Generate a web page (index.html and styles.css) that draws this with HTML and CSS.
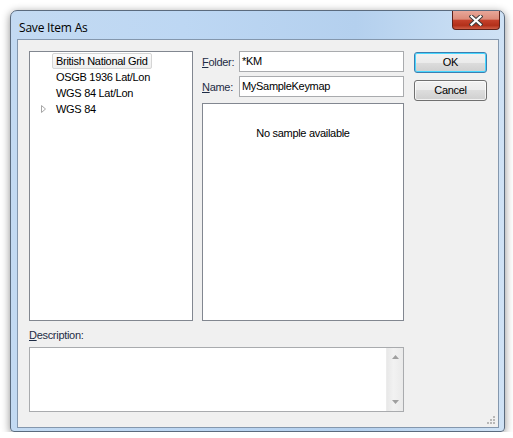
FILE: index.html
```html
<!DOCTYPE html>
<html>
<head>
  <title>Save Item As</title>
  <meta charset="utf-8">
  <link rel="stylesheet" href="styles.css">
</head>
<body>
  <div class="window">
    <div class="titlebar">
      <span class="title">Save Item As</span>
      <div class="close">
        <svg width="14" height="11" viewBox="0 0 14 11">
          <path d="M2.5 1.5 L11.5 9.5 M11.5 1.5 L2.5 9.5" stroke="#3b3b3b" stroke-width="4.2" stroke-linecap="square"/>
          <path d="M2.5 1.5 L11.5 9.5 M11.5 1.5 L2.5 9.5" stroke="#fff" stroke-width="2.2" stroke-linecap="square"/>
        </svg>
      </div>
    </div>
    <div class="client">
      <div class="main">
        <div class="tree">
          <div class="node"><span class="label selected">British National Grid</span></div>
          <div class="node"><span class="label">OSGB 1936 Lat/Lon</span></div>
          <div class="node"><span class="label">WGS 84 Lat/Lon</span></div>
          <div class="node">
            <span class="twisty">
              <svg width="6" height="8" viewBox="0 0 6 8"><path d="M0.5 0.5 L4.5 4 L0.5 7.5 Z" fill="#fff" stroke="#a6a6a6"/></svg>
            </span>
            <span class="label">WGS 84</span>
          </div>
        </div>
        <div class="fields">
          <div class="field">
            <label><u>F</u>older:</label>
            <div class="input">*KM</div>
          </div>
          <div class="field">
            <label><u>N</u>ame:</label>
            <div class="input">MySampleKeymap</div>
          </div>
          <div class="preview">No sample available</div>
        </div>
        <div class="actions">
          <div class="btn default">OK</div>
          <div class="btn">Cancel</div>
        </div>
      </div>
      <div class="desc-label"><u>D</u>escription:</div>
      <div class="desc">
        <div class="scroll">
          <svg width="7" height="4" viewBox="0 0 7 4"><path d="M0 4 L3.5 0 L7 4 Z" fill="#a0a0a0"/></svg>
          <svg width="7" height="4" viewBox="0 0 7 4"><path d="M0 0 L3.5 4 L7 0 Z" fill="#a0a0a0"/></svg>
        </div>
      </div>
      <svg class="grip" width="8" height="8" viewBox="0 0 8 8">
        <g fill="#b8b8b8">
          <rect x="6" y="0" width="2" height="2"/>
          <rect x="3" y="3" width="2" height="2"/><rect x="6" y="3" width="2" height="2"/>
          <rect x="0" y="6" width="2" height="2"/><rect x="3" y="6" width="2" height="2"/><rect x="6" y="6" width="2" height="2"/>
        </g>
      </svg>
    </div>
  </div>
</body>
</html>
```

FILE: styles.css
```css
body {
  margin: 0;
  background: #fff;
  font-family: "Liberation Sans", Arial, sans-serif;
  font-size: 11px;
  letter-spacing: -0.3px;
  color: #000;
}

.window {
  margin: 10px 0 0 10px;
  width: 482px;
  height: 417px;
  border: 1px solid #5b6b7e;
  border-radius: 7px 7px 4px 4px;
  background: linear-gradient(to right, #c3daf2, #bdd7f3 35%, #b4d0ee 70%, #cfe2f5);
  box-shadow: 0 2px 9px rgba(0, 0, 0, 0.45);
  padding: 0 5px 3px 6px;
  display: flex;
  flex-direction: column;
}

.titlebar {
  height: 28px;
  display: flex;
  align-items: flex-start;
  justify-content: space-between;
}

.title {
  font-family: "Open Sans", "Liberation Sans", sans-serif;
  font-size: 12px;
  letter-spacing: -0.2px;
  padding: 8px 0 0 2px;
}

.close {
  width: 46px;
  height: 18px;
  margin-right: -1px;
  border: 1px solid #5e2119;
  border-top: none;
  border-radius: 0 0 4px 4px;
  background: linear-gradient(#e8a799, #dc8b79 45%, #c4402a 52%, #b2301a 80%, #cf5e46);
  display: flex;
  align-items: center;
  justify-content: center;
}

.client {
  flex: 1;
  border: 1px solid #8497ad;
  background: #f0f0f0;
  padding: 11px 11px 0 11px;
  position: relative;
}

.main {
  display: flex;
  height: 270px;
}

.tree {
  width: 163px;
  border: 1px solid #828790;
  background: #fff;
  padding-top: 1px;
}

.node {
  height: 16px;
  display: flex;
  align-items: center;
  padding-left: 22px;
  position: relative;
}

.label {
  padding: 1px 3px;
  border: 1px solid transparent;
  line-height: 12px;
}

.label.selected {
  border-color: #d5d5d5;
  border-radius: 2px;
  background: linear-gradient(#fbfbfb, #eeeeee);
}

.twisty {
  position: absolute;
  left: 11px;
  top: 4px;
  line-height: 0;
}

.fields {
  width: 202px;
  margin-left: 9px;
  display: flex;
  flex-direction: column;
}

.field {
  display: flex;
  align-items: center;
  height: 21px;
  margin-bottom: 4px;
}

.field label {
  width: 37px;
  color: #1e2c45;
}

.input {
  width: 161px;
  height: 19px;
  border: 1px solid #a9abae;
  background: #fff;
  padding-left: 2px;
  line-height: 19px;
}

.preview {
  margin-top: 2px;
  height: 193px;
  border: 1px solid #828790;
  background: #fff;
  text-align: center;
  padding-top: 23px;
}

.actions {
  margin-left: 10px;
  padding-top: 1px;
  display: flex;
  flex-direction: column;
  gap: 7px;
}

.btn {
  width: 71px;
  height: 19px;
  border: 1px solid #707070;
  border-radius: 3px;
  background: linear-gradient(#f2f2f2, #ebebeb 50%, #dddddd 50%, #cfcfcf);
  box-shadow: inset 0 0 0 1px rgba(255, 255, 255, 0.7);
  text-align: center;
  line-height: 19px;
}

.btn.default {
  border-color: #3c7fb1;
  box-shadow: inset 0 0 0 1px #48d7ff;
}

.desc-label {
  margin-top: 8px;
  height: 13px;
  line-height: 13px;
  color: #1e2c45;
}

.desc {
  margin-top: 5px;
  width: 373px;
  height: 63px;
  border: 1px solid #a9abae;
  background: #fff;
  display: flex;
  justify-content: flex-end;
}

.scroll {
  width: 16px;
  background: linear-gradient(to right, #e8e8e8, #f2f2f2 40%, #eaeaea);
  border-left: 1px solid #ececec;
  display: flex;
  flex-direction: column;
  justify-content: space-between;
  align-items: center;
  padding: 7px 0;
}

.grip {
  position: absolute;
  right: 3px;
  bottom: 3px;
}
```
